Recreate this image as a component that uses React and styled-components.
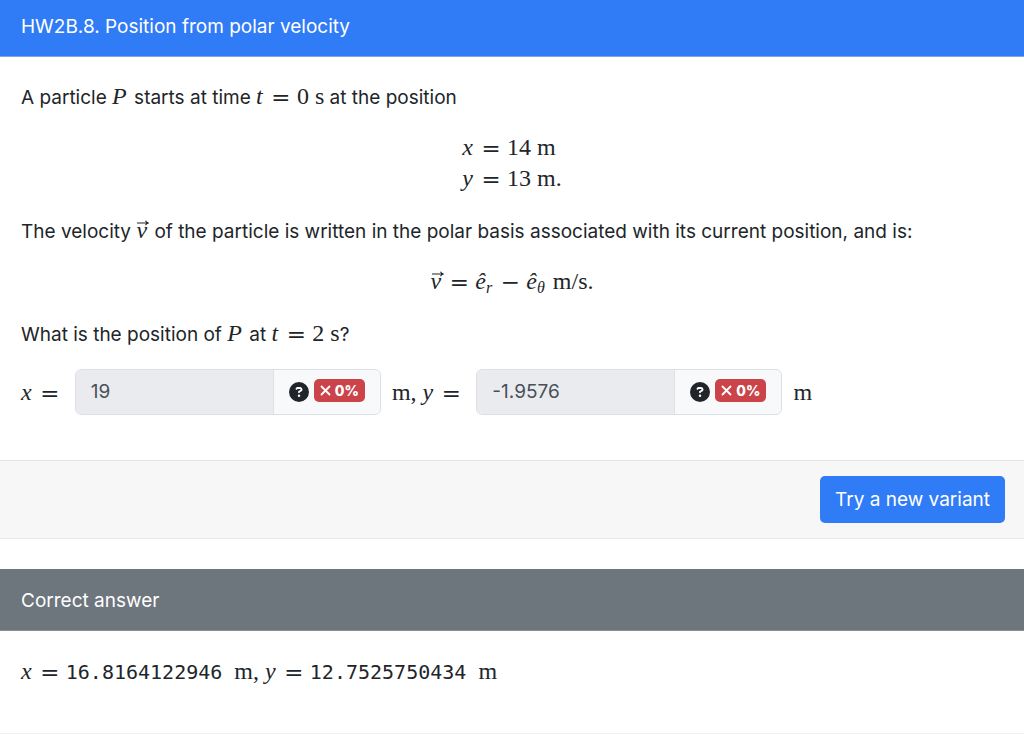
import React from "react";
import styled, { createGlobalStyle } from "styled-components";

const SANS = `Inter, "Liberation Sans", sans-serif`;
const SERIF = `"Liberation Serif", serif`;

const GlobalStyle = createGlobalStyle`
  *, *::before, *::after { box-sizing: border-box; }
  body {
    margin: 0;
    background: #fff;
    color: #212529;
    font-family: ${SANS};
    font-size: 19px;
    line-height: 30px;
  }
`;

const Page = styled.main`
  display: flex;
  flex-direction: column;
`;

const Card = styled.section`
  display: flex;
  flex-direction: column;
  border-bottom: 1px solid ${(p) => (p.$faint ? "#f0f0f1" : "#e9e9ea")};
  margin-bottom: 30px;
`;

const CardHeader = styled.header`
  padding: ${(p) => (p.$cut ? "12px 21px 14px" : "17px 21px 14px")};
  background: ${(p) => (p.$tone === "primary" ? "#307bf6" : "#6d757d")};
  border-bottom: 1px solid ${(p) => (p.$tone === "primary" ? "#7aa5ec" : "#888e94")};
  color: #fff;
`;

const Title = styled.h1`
  margin: 0;
  font: inherit;
`;

const Subtitle = styled.h2`
  margin: 0;
  font: inherit;
`;

const CardBody = styled.div`
  display: flex;
  flex-direction: column;
  gap: 19px;
  padding: 26px 21px 45px;
`;

const Paragraph = styled.p`
  margin: 0;
`;

const Formula = styled.span`
  font-family: ${SERIF};
  font-size: 24px;
  line-height: 1;
  white-space: nowrap;
`;

const Display = styled.div`
  display: grid;
  grid-template-columns: auto auto;
  justify-content: center;
  padding-bottom: 4px;
  font-family: ${SERIF};
  font-size: 24px;
  line-height: 31px;
`;

const Left = styled.span`
  text-align: right;
`;

const Var = styled.i`
  display: inline-block;
  position: relative;
  padding-right: ${(p) => (p.$tight ? "0" : "2px")};
  line-height: 24px;
`;

const Sub = styled.sub`
  margin-right: 2px;
  font-size: 16px;
  line-height: 0;
  font-style: italic;
  vertical-align: -4px;
`;

const Sign = styled.span`
  font-family: "DejaVu Math TeX Gyre", ${SERIF};
  font-size: 23px;
  line-height: 0;
  margin: 0 7px;
`;

const Unit = styled.span`
  margin-left: 6px;
`;

const Arrow = styled.svg`
  position: absolute;
  left: 1px;
  top: 2px;
  width: 12px;
  height: 6px;
`;

const AnswerForm = styled.form`
  display: flex;
  flex-wrap: wrap;
  align-items: center;
`;

const Label = styled.label`
  font-family: ${SERIF};
  font-size: 24px;
  margin-right: 9px;
`;

const InputGroup = styled.div`
  display: flex;
  height: 46px;
  margin-right: 11px;
  border: 1px solid #dce0e5;
  border-radius: 6px;
  background: #f8f9fb;
  overflow: hidden;
`;

const NumberInput = styled.input`
  width: 198px;
  padding: 0 15px;
  border: 0;
  border-right: 1px solid #dee2e6;
  border-radius: 0;
  background: #e9ebef;
  color: #495057;
  font: inherit;
`;

const Feedback = styled.div`
  display: flex;
  align-items: center;
  gap: 5px;
  padding: 0 15px;
`;

const HelpButton = styled.button`
  display: flex;
  padding: 0;
  border: 0;
  background: none;
  color: #212529;
`;

const Badge = styled.span`
  display: flex;
  align-items: center;
  gap: 4px;
  height: 23px;
  margin-bottom: 3px;
  padding: 0 6px;
  border-radius: 5px;
  background: #cb444a;
  color: #fff;
  font-size: 14px;
  font-weight: 800;
`;

const CardFooter = styled.footer`
  display: flex;
  justify-content: flex-end;
  padding: 15px 19px;
  border-top: 1px solid #e2e3e4;
  background: #f7f7f7;
`;

const PrimaryButton = styled.button`
  height: 47px;
  padding: 1px 15px 0;
  border: 0;
  border-radius: 5px;
  background: #307bf6;
  color: #fff;
  font: inherit;
`;

const Code = styled.code`
  font-family: "DejaVu Sans Mono", monospace;
  font-size: 20px;
  white-space: pre;
`;

const Vec = () => (
  <Var>
    v
    <Arrow viewBox="0 0 12 6" aria-hidden="true">
      <path d="M0 3H11M8.5 0.8Q9.2 2.4 11.3 3Q9.2 3.6 8.5 5.2" fill="none" stroke="currentColor" strokeWidth="1.1" />
    </Arrow>
  </Var>
);

const HelpIcon = () => (
  <svg width="20" height="20" viewBox="0 0 512 512" fill="currentColor" aria-hidden="true">
    <path d="M256 512A256 256 0 1 0 256 0a256 256 0 1 0 0 512zM169.800 165.300c7.900-22.300 29.100-37.300 52.800-37.300h58.300c34.900 0 63.100 28.300 63.100 63.100c0 22.600-12.100 43.500-31.700 54.800L280 264.400c-.2 13-10.900 23.600-24 23.600c-13.300 0-24-10.700-24-24V250.500c0-8.600 4.600-16.500 12.100-20.800l44.300-25.400c4.700-2.700 7.600-7.700 7.600-13.100c0-8.400-6.800-15.100-15.100-15.100H222.600c-3.400 0-6.400 2.100-7.500 5.300l-.4 1.200c-4.400 12.500-18.200 19-30.600 14.600s-19-18.200-14.600-30.600l.3-1.300zM224 352a32 32 0 1 1 64 0 32 32 0 1 1-64 0z" />
  </svg>
);

const Score = ({ value }) => (
  <Badge>
    <svg width="11" height="11" viewBox="0 0 11 11" aria-hidden="true">
      <path d="M1.500 1.500L9.500 9.500M9.500 1.500L1.500 9.500" stroke="currentColor" strokeWidth="1.8" strokeLinecap="round" />
    </svg>
    {value}
  </Badge>
);

const AnswerField = ({ id, value }) => (
  <InputGroup>
    <NumberInput id={id} type="text" defaultValue={value} disabled />
    <Feedback>
      <HelpButton type="button" aria-label="Help">
        <HelpIcon />
      </HelpButton>
      <Score value="0%" />
    </Feedback>
  </InputGroup>
);

export default function App() {
  return (
    <>
      <GlobalStyle />
      <Page>
        <Card>
          <CardHeader $tone="primary" $cut>
            <Title>HW2B.8. Position from polar velocity</Title>
          </CardHeader>
          <CardBody>
            <Paragraph>
              A particle <Formula><Var>P</Var></Formula> starts at time{" "}
              <Formula><Var>t</Var><Sign>=</Sign>0<Unit>s</Unit></Formula> at the position
            </Paragraph>
            <Display>
              <Left><Var>x</Var></Left>
              <span><Sign>=</Sign>14<Unit>m</Unit></span>
              <Left><Var>y</Var></Left>
              <span><Sign>=</Sign>13<Unit>m.</Unit></span>
            </Display>
            <Paragraph>
              The velocity <Formula><Vec /></Formula> of the particle is written in the polar basis
              associated with its current position, and is:
            </Paragraph>
            <Display>
              <Left><Vec /></Left>
              <span>
                <Sign>=</Sign><Var $tight>ê</Var><Sub>r</Sub><Sign>−</Sign><Var $tight>ê</Var><Sub>θ</Sub>
                <Unit>m/s.</Unit>
              </span>
            </Display>
            <Paragraph>
              What is the position of <Formula><Var>P</Var></Formula> at{" "}
              <Formula><Var>t</Var><Sign>=</Sign>2<Unit>s</Unit></Formula>?
            </Paragraph>
            <AnswerForm>
              <Label htmlFor="answer-x"><Var>x</Var><Sign>=</Sign></Label>
              <AnswerField id="answer-x" value="19" />
              <Label htmlFor="answer-y">m, <Var>y</Var><Sign>=</Sign></Label>
              <AnswerField id="answer-y" value="-1.9576" />
              <Formula>m</Formula>
            </AnswerForm>
          </CardBody>
          <CardFooter>
            <PrimaryButton type="button">Try a new variant</PrimaryButton>
          </CardFooter>
        </Card>
        <Card $faint>
          <CardHeader>
            <Subtitle>Correct answer</Subtitle>
          </CardHeader>
          <CardBody>
            <Paragraph>
              <Formula><Var>x</Var><Sign>=</Sign></Formula>
              <Code>16.8164122946 </Code>
              <Formula>m, <Var>y</Var><Sign>=</Sign></Formula>
              <Code>12.7525750434 </Code>
              <Formula>m</Formula>
            </Paragraph>
          </CardBody>
        </Card>
      </Page>
    </>
  );
}
